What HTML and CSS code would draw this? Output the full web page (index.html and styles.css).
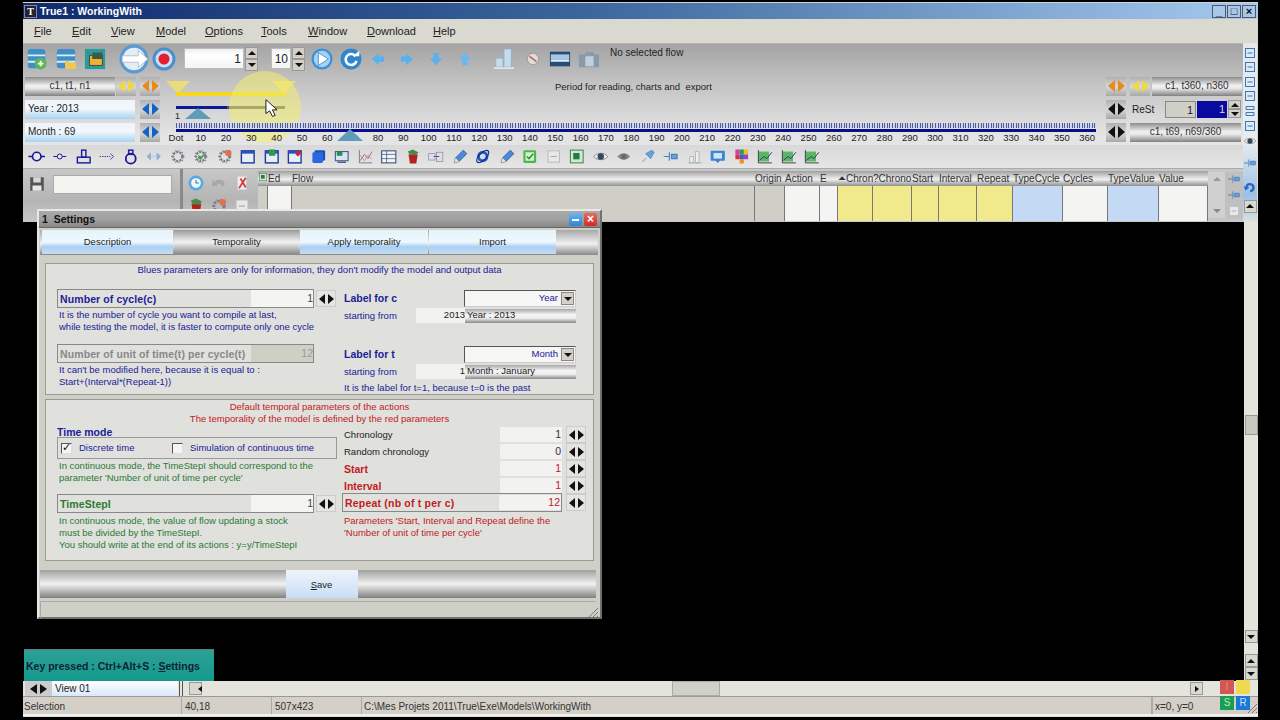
FILE: index.html
```html
<!DOCTYPE html>
<html lang="en">
<head>
  <meta charset="UTF-8" />
  <title>True1 : WorkingWith</title>
  <link rel="stylesheet" href="styles.css">
</head>
<body>
  <svg class="defs" width="0" height="0">
    <symbol id="db-add" viewBox="0 0 24 24"><rect x="2" y="1" width="19" height="21" rx="3" fill="#3f8fc8"/><path d="M2 8h19M2 15h19" stroke="#d8eefa" stroke-width="2"/><circle cx="16" cy="17" r="6.5" fill="#58b858"/><path d="M13 17h6M16 14v6" stroke="#fff" stroke-width="2"/></symbol>
    <symbol id="db-open" viewBox="0 0 24 24"><rect x="2" y="1" width="20" height="21" rx="3" fill="#3f8fc8"/><path d="M2 8h20M2 15h20" stroke="#d8eefa" stroke-width="2"/><path d="M11 14h4l1 2h7v7H11z" fill="#f0c850"/></symbol>
    <symbol id="db-win" viewBox="0 0 24 24"><rect x="1" y="1" width="22" height="22" fill="#2a9a9a"/><rect x="6" y="8" width="14" height="11" fill="#f0b030" stroke="#444"/><rect x="9" y="5" width="11" height="7" fill="#3a5a50"/></symbol>
    <symbol id="ring-go" viewBox="0 0 28 28"><circle cx="14" cy="14" r="13.5" fill="#5a9ad4"/><circle cx="14" cy="14" r="10.5" fill="#e4ecf4"/><path d="M3 11h15V6l9 8-9 8v-5H3z" fill="#fff" stroke="#a4b4c4" stroke-width=".7"/></symbol>
    <symbol id="ring-rec" viewBox="0 0 24 24"><circle cx="12" cy="12" r="11.5" fill="#4a90d0"/><circle cx="12" cy="12" r="8.5" fill="#cfe0ee"/><circle cx="12" cy="12" r="5.5" fill="#e02030"/></symbol>
    <symbol id="ring-play" viewBox="0 0 24 24"><circle cx="12" cy="12" r="11.5" fill="#3f8fd8"/><circle cx="12" cy="12" r="9" fill="#a8d2f2"/><path d="M8 5l11 7-11 7z" fill="#fff" stroke="#3f8fd8"/></symbol>
    <symbol id="ring-loop" viewBox="0 0 24 24"><circle cx="12" cy="12" r="11.5" fill="#2f86cc"/><path d="M17 9a6 6 0 1 0 1 5" fill="none" stroke="#fff" stroke-width="2.8"/><path d="M14 9h7V3z" fill="#fff"/></symbol>
    <symbol id="arr-l" viewBox="0 0 16 16"><path d="M1 8l8-7v4h6v6H9v4z" fill="#5ab0ee"/></symbol>
    <symbol id="arr-r" viewBox="0 0 16 16"><path d="M15 8L7 1v4H1v6h6v4z" fill="#5ab0ee"/></symbol>
    <symbol id="arr-d" viewBox="0 0 16 16"><path d="M8 15l7-8h-4V1H5v6H1z" fill="#5ab0ee"/></symbol>
    <symbol id="arr-u" viewBox="0 0 16 16"><path d="M8 1l7 8h-4v6H5V9H1z" fill="#6ab8f0"/></symbol>
    <symbol id="tall-bars" viewBox="0 0 24 24"><path d="M3 11h8v10H3zM12 1h8v20h-8z" fill="#c6dcea" stroke="#8fb0c4"/><path d="M1 22h22" stroke="#dfe6ea" stroke-width="2"/></symbol>
    <symbol id="gauge" viewBox="0 0 16 16"><circle cx="8" cy="8" r="6.5" fill="#dcdcdc" stroke="#999"/><path d="M4 5l8 6" stroke="#c06040" stroke-width="1.5"/></symbol>
    <symbol id="landscape" viewBox="0 0 24 20"><rect x="1" y="2" width="22" height="16" fill="#284c78"/><rect x="2" y="5" width="20" height="6" fill="#a8c8e0"/><rect x="2" y="11" width="20" height="2" fill="#e8eef2"/></symbol>
    <symbol id="camera" viewBox="0 0 24 20"><path d="M1 5h6l2-3h7l2 3h5v14H1z" fill="#8a9aa8"/><rect x="8" y="7" width="9" height="11" fill="#c0d0dc"/></symbol>
    <symbol id="node-big" viewBox="0 0 24 24"><path d="M0 12h24" stroke="#1a1a9a" stroke-width="2.4"/><circle cx="12" cy="12" r="6" fill="#e6e6e6" stroke="#1a1a9a" stroke-width="2.4"/></symbol>
    <symbol id="node-small" viewBox="0 0 24 24"><path d="M3 12h18" stroke="#1a1a9a" stroke-width="1.4"/><circle cx="12" cy="12" r="3.5" fill="#e6e6e6" stroke="#1a1a9a" stroke-width="1.4"/></symbol>
    <symbol id="stamp" viewBox="0 0 24 24"><rect x="9" y="3" width="6" height="10" fill="none" stroke="#1a1a9a" stroke-width="2"/><rect x="3" y="13" width="18" height="8" fill="none" stroke="#1a1a9a" stroke-width="2"/></symbol>
    <symbol id="dots" viewBox="0 0 24 24"><path d="M2 12h15" stroke="#3a3aa8" stroke-dasharray="2 1.4" stroke-width="1.4"/><path d="M17 8l5 4-5 4" fill="none" stroke="#3a3aa8" stroke-width="1.2"/></symbol>
    <symbol id="ring-top" viewBox="0 0 24 24"><circle cx="12" cy="15" r="7" fill="none" stroke="#1a1a9a" stroke-width="2.6"/><rect x="9" y="3" width="6" height="6" fill="none" stroke="#1a1a9a" stroke-width="2"/></symbol>
    <symbol id="swap" viewBox="0 0 24 24"><path d="M2 12l6-6v12zM22 12l-6-6v12z" fill="#8eaed6"/><path d="M8 12h8" stroke="#c4d4e6" stroke-width="3"/></symbol>
    <symbol id="gear" viewBox="0 0 24 24"><circle cx="12" cy="12" r="6.5" fill="none" stroke="#778" stroke-width="3" stroke-dasharray="3 1.6"/><circle cx="12" cy="12" r="8.5" fill="none" stroke="#889" stroke-width="1.6" stroke-dasharray="2 3"/></symbol>
    <symbol id="gear-green" viewBox="0 0 24 24"><use href="#gear"/><path d="M8 14l4 3 9-12-9 7-3-2z" fill="#3aa050"/></symbol>
    <symbol id="gear-red" viewBox="0 0 24 24"><use href="#gear"/><circle cx="17" cy="7" r="4.5" fill="#e07050"/></symbol>
    <symbol id="win" viewBox="0 0 24 24"><rect x="3" y="4" width="18" height="17" fill="#e6eef6" stroke="#1e3aa0" stroke-width="2"/><rect x="3" y="4" width="18" height="4" fill="#2a52b8"/></symbol>
    <symbol id="win-green" viewBox="0 0 24 24"><use href="#win"/><rect x="8" y="2" width="9" height="9" fill="#2e9a50"/></symbol>
    <symbol id="win-red" viewBox="0 0 24 24"><use href="#win"/><path d="M13 9l4-6 5 3-5 6z" fill="#d82030"/></symbol>
    <symbol id="stack" viewBox="0 0 24 24"><rect x="6" y="3" width="15" height="15" rx="2" fill="#1a50c0"/><rect x="3" y="6" width="15" height="15" rx="2" fill="#2a68e0"/></symbol>
    <symbol id="monitor" viewBox="0 0 24 24"><rect x="3" y="5" width="18" height="13" fill="#d8e4f0" stroke="#48608c" stroke-width="1.6"/><rect x="5" y="5" width="8" height="6" fill="#2a8a58"/><path d="M6 20h12" stroke="#48608c" stroke-width="2"/></symbol>
    <symbol id="chart" viewBox="0 0 24 24"><path d="M3 3v18h18" fill="none" stroke="#8a7a8a" stroke-width="1.4"/><path d="M4 18l6-9 5 6 6-10" fill="none" stroke="#c06868" stroke-width="1.4"/><path d="M4 10l6 8 5-8 5 6" fill="none" stroke="#8888b0" stroke-width="1"/></symbol>
    <symbol id="table" viewBox="0 0 24 24"><rect x="2" y="4" width="20" height="17" fill="#f4f4f4" stroke="#34507c" stroke-width="1.5"/><path d="M2 9h20M2 15h20M9 4v17" stroke="#34507c"/></symbol>
    <symbol id="trash" viewBox="0 0 24 24"><path d="M6 9h13l-2 13H8z" fill="#b82020"/><path d="M5 5l7-3 8 4-3 4H8z" fill="#4a8a48"/></symbol>
    <symbol id="link" viewBox="0 0 24 24"><rect x="2" y="8" width="9" height="9" fill="#dde" stroke="#889"/><rect x="13" y="6" width="9" height="13" fill="#dde" stroke="#889"/><path d="M9 12h8" stroke="#556" stroke-width="1.4"/></symbol>
    <symbol id="pencil" viewBox="0 0 24 24"><path d="M4 21l2-7L17 3l5 5-11 11z" fill="#4a8ad8" stroke="#1e4a90"/><path d="M4 21l2-7 5 5z" fill="#f4e0c0"/></symbol>
    <symbol id="orbit" viewBox="0 0 24 24"><circle cx="12" cy="12" r="8" fill="#2a58c8"/><circle cx="12" cy="12" r="4" fill="#cfe0f6"/><ellipse cx="12" cy="12" rx="11" ry="5" fill="none" stroke="#14307c" stroke-width="1.6" transform="rotate(-45 12 12)"/></symbol>
    <symbol id="check" viewBox="0 0 24 24"><rect x="3" y="3" width="18" height="18" rx="2" fill="#48b848"/><rect x="6" y="6" width="12" height="12" fill="#d8f0d0"/><path d="M8 12l3 3 6-7" fill="none" stroke="#289828" stroke-width="2.2"/></symbol>
    <symbol id="minus" viewBox="0 0 24 24"><rect x="4" y="4" width="16" height="16" fill="#e8e8e8" stroke="#bbb" stroke-width="1.4"/><path d="M8 12h8" stroke="#aaa" stroke-width="1.6"/></symbol>
    <symbol id="picture" viewBox="0 0 24 24"><rect x="3" y="3" width="18" height="18" fill="#d0ecd0" stroke="#407a50" stroke-width="1.4"/><rect x="7" y="7" width="9" height="9" fill="#287a48"/></symbol>
    <symbol id="eye" viewBox="0 0 24 24"><path d="M2 12c5-6 15-6 20 0-5 6-15 6-20 0z" fill="#eee" stroke="#667"/><circle cx="12" cy="12" r="4.5" fill="#33485c"/></symbol>
    <symbol id="eye-off" viewBox="0 0 24 24"><path d="M3 12c5-6 13-6 18 0-5 6-13 6-18 0z" fill="#8a8a8a"/><circle cx="12" cy="12" r="4" fill="#6a6a6a"/></symbol>
    <symbol id="pin" viewBox="0 0 24 24"><path d="M4 20l6-6M9 8l7 7 5-9-3-3z" fill="#6aa0dc" stroke="#4a80c0"/></symbol>
    <symbol id="pin-h" viewBox="0 0 24 24"><path d="M2 12h8" stroke="#4a80c0" stroke-width="1.6"/><path d="M10 6v12M13 9v6h8V9z" fill="#6aa0dc" stroke="#4a80c0" stroke-width="1.6"/></symbol>
    <symbol id="bars-thin" viewBox="0 0 24 24"><path d="M5 12h5v9H5zM13 5h5v16h-5z" fill="#eee" stroke="#9aa"/><path d="M2 21h20" stroke="#9aa"/></symbol>
    <symbol id="speech" viewBox="0 0 24 24"><path d="M3 4h18a1 1 0 0 1 1 1v12a1 1 0 0 1-1 1h-6l-3 3-3-3H3a1 1 0 0 1-1-1V5a1 1 0 0 1 1-1z" fill="#3a84d4"/><rect x="6" y="7" width="12" height="8" fill="#cfe4f8"/></symbol>
    <symbol id="swatch" viewBox="0 0 24 24"><path d="M3 2h6v7H3z" fill="#d83ab0"/><path d="M9 2h6v7H9z" fill="#2e9a50"/><path d="M15 2h6v7h-6z" fill="#f0c020"/><path d="M3 9h6v7H3z" fill="#e03030"/><path d="M9 9h6v7H9z" fill="#3060d0"/><path d="M15 9h6v7h-6z" fill="#a040c0"/><path d="M9 16h6v6H9z" fill="#f09020"/></symbol>
    <symbol id="chart-n" viewBox="0 0 24 24"><rect x="3" y="5" width="15" height="14" fill="#5ab860"/><path d="M3 3v18h19" fill="none" stroke="#445" stroke-width="1.4"/><path d="M5 17l6-5 4 3 7-9" fill="none" stroke="#303888" stroke-width="1.4"/></symbol>
    <symbol id="floppy" viewBox="0 0 24 24"><path d="M3 3h18v18H3z" fill="#555"/><rect x="7" y="3" width="10" height="7" fill="#d8d8d8"/><rect x="6" y="14" width="12" height="7" fill="#e8e8e8"/></symbol>
    <symbol id="clock" viewBox="0 0 24 24"><circle cx="12" cy="12" r="10" fill="#58a8e4"/><circle cx="12" cy="12" r="6.5" fill="#eef6fc"/><path d="M12 8v4h4" fill="none" stroke="#3a80c0" stroke-width="1.6"/></symbol>
    <symbol id="undo" viewBox="0 0 24 24"><path d="M5 12a8 8 0 0 1 15 2l-4 3a5 5 0 0 0-7-4l2 3H3V7l2 2z" fill="#a8a8a8"/></symbol>
    <symbol id="doc-red" viewBox="0 0 24 24"><path d="M6 3h12v18H6z" fill="#eee" stroke="#ccc"/><path d="M8 19L17 5M10 6l7 12" stroke="#d04040" stroke-width="2.4"/></symbol>
    <symbol id="undo-blue" viewBox="0 0 24 24"><path d="M4 12a8 8 0 1 1 8 9v-4a4 4 0 1 0-4-5l3 1-7 5-3-8 3 2z" fill="#2868c0"/></symbol>
    <symbol id="mini" viewBox="0 0 12 12"><rect x="1.5" y="1.5" width="9" height="9" fill="#dceaf6" stroke="#3c78b8"/><path d="M3.5 6h5" stroke="#3c78b8"/></symbol>
    <symbol id="mini-split" viewBox="0 0 12 12"><path d="M2 1.5h8v3H2zM2 7.5h8v3H2z" fill="#dceaf6" stroke="#3c78b8"/></symbol>
  </svg>

  <div class="app">
    <header class="titlebar">
      <span class="app-icon">T</span>
      <span class="title-text">True1 : WorkingWith</span>
      <span class="win-btns">
        <button class="win-btn">_</button><button class="win-btn">□</button><button class="win-btn">×</button>
      </span>
    </header>

    <nav class="menubar">
      <span class="m m-file"><u>F</u>ile</span>
      <span class="m m-edit"><u>E</u>dit</span>
      <span class="m m-view"><u>V</u>iew</span>
      <span class="m m-model"><u>M</u>odel</span>
      <span class="m m-options"><u>O</u>ptions</span>
      <span class="m m-tools"><u>T</u>ools</span>
      <span class="m m-window"><u>W</u>indow</span>
      <span class="m m-download"><u>D</u>ownload</span>
      <span class="m m-help"><u>H</u>elp</span>
    </nav>

    <div class="upper">
      <div class="upper-main">
        <section class="toolbar">
          <div class="row-one">
            <svg class="ic22"><use href="#db-add"/></svg>
            <svg class="ic22 gap6"><use href="#db-open"/></svg>
            <svg class="ic22 gap6"><use href="#db-win"/></svg>
            <svg class="ic28 gap13"><use href="#ring-go"/></svg>
            <svg class="ic24 gap2"><use href="#ring-rec"/></svg>
            <span class="num num-a">1</span>
            <span class="spin spin-tall"><i class="up"></i><i class="down"></i></span>
            <span class="num num-b">10</span>
            <span class="spin spin-tall"><i class="up"></i><i class="down"></i></span>
            <svg class="ic22 gap5"><use href="#ring-play"/></svg>
            <svg class="ic22 gap6"><use href="#ring-loop"/></svg>
            <svg class="ic14 gap10"><use href="#arr-l"/></svg>
            <svg class="ic14 gap15"><use href="#arr-r"/></svg>
            <svg class="ic14 gap15"><use href="#arr-d"/></svg>
            <svg class="ic14 gap15"><use href="#arr-u"/></svg>
            <svg class="ic22 gap20"><use href="#tall-bars"/></svg>
            <svg class="ic14 gap11"><use href="#gauge"/></svg>
            <svg class="ic22 gap10"><use href="#landscape"/></svg>
            <svg class="ic22 gap6"><use href="#camera"/></svg>
            <span class="no-flow">No selected flow</span>
          </div>

          <div class="row-two">
            <div class="side-left">
              <div class="line">
                <span class="steel steel-a">c1, t1, n1</span>
                <span class="nav gold"><i class="l"></i><i class="r"></i></span>
                <span class="nav orange"><i class="l"></i><i class="r"></i></span>
              </div>
              <div class="line">
                <span class="period-box">Year : 2013</span>
                <span class="nav blue"><i class="l"></i><i class="r"></i></span>
              </div>
              <div class="line">
                <span class="period-box">Month : 69</span>
                <span class="nav blue"><i class="l"></i><i class="r"></i></span>
              </div>
            </div>

            <div class="timeline">
              <div class="timeline-top">
                <div class="slider">
                  <span class="tri-y tri-y-a"></span>
                  <span class="tri-y tri-y-b"></span>
                  <span class="y-line"></span>
                  <span class="b-line"></span>
                  <span class="tri-b"></span>
                  <span class="slider-one">1</span>
                  <span class="halo"></span>
                  <svg class="cursor" viewBox="0 0 14 20"><path d="M1 1v15l4-3 3 6 3-1-3-6h5z" fill="#fff" stroke="#111"/></svg>
                </div>
                <p class="period-text">Period for reading, charts and &nbsp;export</p>
              </div>
              <div class="ruler">
                <div class="ticks"></div>
                <div class="rule"></div>
                <div class="labels">
                  <span class="dot-label">Dot</span><span>10</span><span>20</span><span>30</span><span>40</span><span>50</span><span>60</span><span>70</span><span>80</span><span>90</span><span>100</span><span>110</span><span>120</span><span>130</span><span>140</span><span>150</span><span>160</span><span>170</span><span>180</span><span>190</span><span>200</span><span>210</span><span>220</span><span>230</span><span>240</span><span>250</span><span>260</span><span>270</span><span>280</span><span>290</span><span>300</span><span>310</span><span>320</span><span>330</span><span>340</span><span>350</span><span>360</span>
                </div>
                <span class="tri-b tri-ruler"></span>
              </div>
            </div>

            <div class="side-right">
              <div class="line">
                <span class="nav orange"><i class="l"></i><i class="r"></i></span>
                <span class="nav gold nav-mid"><i class="l"></i><i class="r"></i></span>
                <span class="steel steel-b">c1, t360, n360</span>
              </div>
              <div class="line">
                <span class="nav"><i class="l"></i><i class="r"></i></span>
                <span class="rest">ReSt</span>
                <span class="rest-a">1</span>
                <span class="rest-b">1</span>
                <span class="spin"><i class="up"></i><i class="down"></i></span>
              </div>
              <div class="line">
                <span class="nav"><i class="l"></i><i class="r"></i></span>
                <span class="steel steel-c">c1, t69, n69/360</span>
              </div>
            </div>
          </div>
        </section>

        <div class="iconbar">
          <svg><use href="#node-big"/></svg><svg><use href="#node-small"/></svg><svg><use href="#stamp"/></svg><svg><use href="#dots"/></svg><svg><use href="#ring-top"/></svg><svg><use href="#swap"/></svg><svg><use href="#gear"/></svg><svg><use href="#gear-green"/></svg><svg><use href="#gear-red"/></svg><svg><use href="#win"/></svg><svg><use href="#win-green"/></svg><svg><use href="#win-red"/></svg><svg><use href="#stack"/></svg><svg><use href="#monitor"/></svg><svg><use href="#chart"/></svg><svg><use href="#table"/></svg><svg><use href="#trash"/></svg><svg><use href="#link"/></svg><svg><use href="#pencil"/></svg><svg><use href="#orbit"/></svg><svg><use href="#pencil"/></svg><svg><use href="#check"/></svg><svg><use href="#minus"/></svg><svg><use href="#picture"/></svg><svg><use href="#eye"/></svg><svg><use href="#eye-off"/></svg><svg><use href="#pin"/></svg><svg><use href="#pin-h"/></svg><svg><use href="#bars-thin"/></svg><svg><use href="#speech"/></svg><svg><use href="#swatch"/></svg><svg><use href="#chart-n"/></svg><svg><use href="#chart-n"/></svg><svg><use href="#chart-n"/></svg>
        </div>

        <div class="datarow">
          <div class="save-pane">
            <svg class="ic18"><use href="#floppy"/></svg>
            <span class="name-input"></span>
          </div>
          <div class="action-pane">
            <svg class="ic18"><use href="#clock"/></svg>
            <svg class="ic18"><use href="#undo"/></svg>
            <svg class="ic18"><use href="#doc-red"/></svg>
            <svg class="ic18"><use href="#trash"/></svg>
            <svg class="ic18"><use href="#gear-red"/></svg>
            <svg class="ic18"><use href="#minus"/></svg>
          </div>
          <div class="grid">
            <div class="h"><svg class="ic10"><use href="#picture"/></svg></div><div class="h">Ed</div><div class="h">Flow</div><div class="h">Origin</div><div class="h">Action</div><div class="h">E</div><div class="h">⏶Chron</div><div class="h">?Chrono</div><div class="h">Start</div><div class="h">Interval</div><div class="h">Repeat</div><div class="h">TypeCycle</div><div class="h">Cycles</div><div class="h">TypeValue</div><div class="h">Value</div>
            <div class="c grey"></div><div class="c white"></div><div class="c grey"></div><div class="c grey"></div><div class="c white"></div><div class="c white"></div><div class="c yellow"></div><div class="c yellow"></div><div class="c yellow"></div><div class="c yellow"></div><div class="c yellow"></div><div class="c sky"></div><div class="c white"></div><div class="c sky"></div><div class="c white"></div>
          </div>
          <div class="grid-scroll">
            <span class="arrow-cell up-light"></span>
            <span class="arrow-cell down-light"></span>
          </div>
          <div class="grid-pins">
            <svg class="ic14"><use href="#pin-h"/></svg>
            <svg class="ic14"><use href="#pin-h"/></svg>
            <svg class="ic14"><use href="#minus"/></svg>
          </div>
        </div>
      </div>

      <aside class="strip">
        <svg><use href="#mini"/></svg><svg><use href="#mini"/></svg><svg><use href="#mini"/></svg><svg><use href="#mini"/></svg><svg><use href="#mini-split"/></svg><svg><use href="#mini"/></svg>
        <svg class="strip-eye"><use href="#eye"/></svg>
        <svg class="strip-pin"><use href="#pin-h"/></svg>
        <svg class="strip-undo"><use href="#undo-blue"/></svg>
        <span class="sbtn strip-up"><i class="up"></i></span>
      </aside>
    </div>

    <div class="mdi">
      <div class="desktop">
        <div class="key-note">Key pressed : Ctrl+Alt+S : <u>S</u>ettings</div>
      </div>
      <div class="vscroll">
        <span class="vthumb"></span>
        <span class="sbtn vdown"><i class="down"></i></span>
        <span class="sbtn vup"><i class="up"></i></span>
        <span class="sbtn"><i class="down"></i></span>
      </div>
    </div>

    <div class="tabsbar">
      <span class="nav nav-tab"><i class="l"></i><i class="r"></i></span>
      <span class="view-tab">View 01</span>
      <span class="tab-grip"></span>
      <span class="sbtn hleft"><i class="l"></i></span>
      <span class="hthumb"></span>
      <span class="sbtn hright"><i class="r"></i></span>
    </div>

    <footer class="status">
      <span class="s s-sel">Selection</span>
      <span class="s s-pos">40,18</span>
      <span class="s s-size">507x423</span>
      <span class="s s-path">C:\Mes Projets 2011\True\Exe\Models\WorkingWith</span>
      <span class="s s-xy">x=0, y=0</span>
      <svg class="status-grip" viewBox="0 0 12 12"><path d="M11 2L2 11M11 6l-5 5M11 10l-1 1" stroke="#777"/></svg>
    </footer>

    <div class="badges">
      <span class="badge b-red">I</span><span class="badge b-yellow"></span>
      <span class="badge b-green">S</span><span class="badge b-blue">R</span>
    </div>

    <!-- settings child window, floats over the MDI area -->
    <div class="dialog">
      <div class="dlg-title">
        <span>1 &nbsp;Settings</span>
        <span class="dlg-btns"><b class="dlg-min"></b><b class="dlg-close">×</b></span>
      </div>
      <div class="tabs">
        <span class="tab tab-a">Description</span>
        <span class="tab tab-on">Temporality</span>
        <span class="tab tab-c">Apply temporality</span>
        <span class="tab tab-d">Import</span>
      </div>

      <section class="panel panel-one">
        <p class="center blue">Blues parameters are only for information, they don't modify the model and output data</p>
        <div class="cols cols-one">
          <div class="col-l">
            <div class="field-line">
              <div class="field"><b class="blue">Number of cycle(c)</b><span class="val">1</span></div>
              <span class="nav flat"><i class="l"></i><i class="r"></i></span>
            </div>
            <p class="help blue mb12">It is the number of cycle you want to compile at last,<br>while testing the model, it is faster to compute only one cycle</p>
            <div class="field-line">
              <div class="field off"><b>Number of unit of time(t) per cycle(t)</b><span class="val">12</span></div>
            </div>
            <p class="help blue">It can't be modified here, because it is equal to :<br>Start+(Interval*(Repeat-1))</p>
          </div>
          <div class="col-r">
            <div class="label-line"><b class="blue">Label for c</b><span class="combo blue">Year<i class="combo-btn"></i></span></div>
            <div class="start-line"><span class="blue">starting from</span><span class="start-val">2013</span><span class="start-name">Year : 2013</span></div>
            <div class="label-line second"><b class="blue">Label for t</b><span class="combo blue">Month<i class="combo-btn"></i></span></div>
            <div class="start-line"><span class="blue">starting from</span><span class="start-val">1</span><span class="start-name">Month : January</span></div>
            <p class="help blue past">It is the label for t=1, because t=0 is the past</p>
          </div>
        </div>
      </section>

      <section class="panel panel-two">
        <p class="center red">Default temporal parameters of the actions<br>The temporality of the model is defined by the red parameters</p>
        <div class="cols">
          <div class="col-l">
            <b class="blue time-mode">Time mode</b>
            <div class="mode-box">
              <label class="blue mode-a"><i class="tick on"></i>Discrete time</label>
              <label class="blue"><i class="tick"></i>Simulation of continuous time</label>
            </div>
            <p class="help green mb11">In continuous mode, the TimeStepI should correspond to the<br>parameter 'Number of unit of time per cycle'</p>
            <div class="field-line">
              <div class="field"><b class="green">TimeStepI</b><span class="val">1</span></div>
              <span class="nav flat"><i class="l"></i><i class="r"></i></span>
            </div>
            <p class="help green help-low">In continuous mode, the value of flow updating a stock<br>must be divided by the TimeStepI.<br>You should write at the end of its actions : y=y/TimeStepI</p>
          </div>
          <div class="col-r">
            <div class="param"><span>Chronology</span><span class="pval">1</span><span class="nav flat"><i class="l"></i><i class="r"></i></span></div>
            <div class="param"><span>Random chronology</span><span class="pval">0</span><span class="nav flat"><i class="l"></i><i class="r"></i></span></div>
            <div class="param"><b class="red">Start</b><span class="pval red">1</span><span class="nav flat"><i class="l"></i><i class="r"></i></span></div>
            <div class="param"><b class="red">Interval</b><span class="pval red">1</span><span class="nav flat"><i class="l"></i><i class="r"></i></span></div>
            <div class="param param-box"><div class="boxed"><b class="red">Repeat (nb of t per c)</b><span class="pval red">12</span></div><span class="nav flat"><i class="l"></i><i class="r"></i></span></div>
            <p class="help red red-help">Parameters 'Start, Interval and Repeat define the<br>'Number of unit of time per cycle'</p>
          </div>
        </div>
      </section>

      <div class="save-bar"><span class="save-btn"><u>S</u>ave</span></div>
      <div class="dlg-status"><svg class="grip" viewBox="0 0 12 12"><path d="M11 2L2 11M11 6l-5 5M11 10l-1 1" stroke="#777"/></svg></div>
    </div>
  </div>
</body>
</html>
```

FILE: styles.css
```css
html, body {
  margin: 0;
  height: 100%;
  overflow: hidden;
  background: #000;
}
body {
  font-family: "Liberation Sans", Arial, sans-serif;
  font-size: 10px;
  color: #222;
}
.defs { position: absolute; }
p { margin: 0; }
i { display: block; }

/* app frame */
.app {
  position: relative;
  margin: 2px 0 0 23px;
  width: 1235px;
  height: 715px;
  background: #dcdcd4;
  display: flex;
  flex-direction: column;
  border-top: 1px solid #d0d4d8;
  box-sizing: border-box;
}
.titlebar {
  height: 16px;
  flex: none;
  display: flex;
  align-items: center;
  background: linear-gradient(to right, #0f2a6e, #3a659c 45%, #a6caf0);
  color: #fff;
  font-weight: bold;
  font-size: 10.5px;
  padding-left: 1px;
}
.app-icon {
  width: 13px;
  height: 13px;
  background: #223;
  border: 1px solid #88a;
  box-sizing: border-box;
  font: bold 10px/11px "Liberation Serif", serif;
  text-align: center;
  margin-right: 3px;
}
.win-btns { margin-left: auto; margin-right: 2px; display: flex; gap: 1px; }
.win-btn {
  width: 14px;
  height: 13px;
  padding: 0;
  border: 1px solid #556;
  background: #a8c8ea;
  font: bold 11px/10px "Liberation Sans", sans-serif;
  color: #111;
}
.menubar {
  height: 24px;
  flex: none;
  display: flex;
  align-items: center;
  background: #d9d9cf;
  font-size: 11px;
  color: #222;
  position: relative;
}
.m { flex: none; }
.m-file { margin-left: 11px; width: 38px; }
.m-edit { width: 39px; }
.m-view { width: 45px; }
.m-model { width: 49px; }
.m-options { width: 56px; }
.m-tools { width: 47px; }
.m-window { width: 59px; }
.m-download { width: 66px; }

.upper { display: flex; flex: none; }
.upper-main { width: 1220px; }

/* top toolbar */
.toolbar {
  height: 102px;
  background: linear-gradient(to bottom, #a4a4a4, #c4c4c4 40%, #e4e4e4 90%);
  border-top: 1px solid #b8b8b0;
  box-sizing: border-box;
}
.row-one {
  height: 29px;
  display: flex;
  align-items: center;
  padding-left: 3px;
  position: relative;
}
.ic10 { width: 10px; height: 10px; }
.ic14 { width: 14px; height: 14px; flex: none; }
.ic18 { width: 18px; height: 18px; flex: none; }
.ic22 { width: 22px; height: 22px; flex: none; }
.ic24 { width: 24px; height: 24px; flex: none; }
.ic28 { width: 30px; height: 30px; flex: none; }
.gap2 { margin-left: 3px; }
.gap5 { margin-left: 6px; }
.gap6 { margin-left: 7px; }
.gap10 { margin-left: 9px; }
.gap11 { margin-left: 11px; }
.gap13 { margin-left: 13px; }
.gap15 { margin-left: 15px; }
.gap20 { margin-left: 21px; }
.num {
  height: 21px;
  background: linear-gradient(to bottom, #eee, #fff 30%, #f4f4f0);
  border: 1px solid #bbb;
  box-sizing: border-box;
  font-size: 12px;
  line-height: 20px;
  text-align: right;
  padding-right: 2px;
}
.num-a { width: 60px; margin-left: 8px; }
.num-b { width: 20px; margin-left: 13px; }
.spin {
  width: 13px;
  display: flex;
  flex-direction: column;
  flex: none;
}
.spin i {
  height: 9px;
  background: #d4d0c8;
  border: 1px solid #999;
  box-sizing: border-box;
  position: relative;
}
.spin-tall { margin-left: 1px; }
.spin-tall i { height: 12px; }
.spin i::after, .sbtn i::after, .arrow-cell::after {
  content: "";
  position: absolute;
  left: 50%;
  top: 50%;
  margin: -2px 0 0 -4px;
  border-left: 4px solid transparent;
  border-right: 4px solid transparent;
}
.spin .up::after, .sbtn .up::after { border-bottom: 4px solid #111; }
.spin .down::after, .sbtn .down::after { border-top: 4px solid #111; }
.no-flow {
  position: absolute;
  left: 587px;
  top: 3px;
  font-size: 10px;
}

.row-two { display: flex; height: 71px; padding-left: 2px; }
.side-left { width: 135px; flex: none; display: flex; flex-direction: column; padding-top: 3px; gap: 3px; }
.line { display: flex; align-items: center; height: 20px; gap: 4px; }
.steel {
  height: 19px;
  background: linear-gradient(to bottom, #8c8c8c, #f0f0f0 45%, #e8e8e8 60%, #808080);
  text-align: center;
  line-height: 18px;
  color: #333;
  font-size: 10px;
}
.steel-a { width: 90px; margin-right: -3px; }
.steel-b { width: 91px; margin-left: -2px; }
.steel-c { width: 111px; }
.period-box {
  width: 110px;
  height: 19px;
  padding-left: 3px;
  box-sizing: border-box;
  background: linear-gradient(to bottom, #eef4fa, #f2f8fc 45%, #a8d2f2);
  line-height: 18px;
  font-size: 10px;
  margin-right: 1px;
}
.nav {
  display: inline-flex;
  flex: none;
  width: 20px;
  height: 19px;
  align-items: center;
  justify-content: center;
  gap: 3px;
  background: linear-gradient(to bottom, #b0b0b0, #d8d8d8 50%, #a8a8a8);
}
.nav i { width: 0; height: 0; border-top: 6px solid transparent; border-bottom: 6px solid transparent; }
.nav .l { border-right: 7px solid #111; }
.nav .r { border-left: 7px solid #111; }
.nav.gold .l { border-right-color: #f0d840; }
.nav.gold .r { border-left-color: #f0d840; }
.nav.orange .l { border-right-color: #e88a1c; }
.nav.orange .r { border-left-color: #e88a1c; }
.nav.blue .l { border-right-color: #1464c8; }
.nav.blue .r { border-left-color: #1464c8; }
.nav-mid { margin-left: 0; }
.nav.flat { width: 20px; height: 17px; background: #e4e4e0; border: 1px solid #ccc; box-sizing: border-box; }
.nav.flat i { border-top-width: 5px; border-bottom-width: 5px; }
.nav.flat .l { border-right-width: 6px; }
.nav.flat .r { border-left-width: 6px; }

.timeline { width: 945px; flex: none; }
.timeline-top { height: 49px; display: flex; }
.slider { position: relative; width: 180px; flex: none; }
.tri-y {
  position: absolute;
  top: 8px;
  width: 0;
  height: 0;
  border-left: 12px solid transparent;
  border-right: 12px solid transparent;
  border-top: 13px solid #eadb7c;
}
.tri-y-a { left: 6px; }
.tri-y-b { left: 112px; }
.y-line { position: absolute; left: 16px; top: 19px; width: 110px; height: 4px; background: #f6d820; }
.b-line {
  position: absolute;
  left: 16px;
  top: 33px;
  width: 109px;
  height: 3px;
  background: linear-gradient(to right, #0a1a90 47%, #555 47%);
}
.tri-b {
  position: absolute;
  left: 25px;
  top: 35px;
  border-left: 13px solid transparent;
  border-right: 13px solid transparent;
  border-bottom: 11px solid #5f9cba;
}
.slider-one { position: absolute; left: 15px; top: 38px; font-size: 9px; }
.halo {
  position: absolute;
  left: 69px;
  top: -2px;
  width: 72px;
  height: 72px;
  border-radius: 50%;
  background: rgba(240, 236, 110, .55);
}
.cursor { position: absolute; left: 105px; top: 25px; width: 13px; height: 20px; }
.period-text { margin: 8px 0 0 215px; white-space: nowrap; line-height: 12px; font-size: 9.5px; }

.ruler { position: relative; height: 22px; width: 932px; margin-left: 4px; overflow: hidden; }
.ticks {
  height: 5px;
  margin: 1px 0 0 12px;
  background: repeating-linear-gradient(to right, #4a5aa8 0 1px, #d4d6e0 1px 2.53px);
}
.rule { height: 3px; margin: 1px 0 0 12px; background: #06108c; }
.labels { display: flex; font-size: 9.5px; line-height: 12px; white-space: nowrap; }
.labels span { flex: none; width: 25.33px; text-align: center; }
.labels .dot-label { width: 24px; }
.tri-ruler { left: 173px; top: 7px; border-bottom-width: 12px; border-bottom-color: #5f9cba; }

.side-right { width: 136px; flex: none; display: flex; flex-direction: column; padding-top: 3px; gap: 3px; margin-left: 1px; }
.rest { width: 28px; margin-left: 2px; font-size: 10px; }
.rest-a, .rest-b { height: 17px; width: 31px; box-sizing: border-box; text-align: right; padding-right: 2px; line-height: 16px; font-size: 11px; }
.rest-a { background: #cfcfc8; border: 1px solid #888; margin-left: 1px; margin-right: -3px; }
.rest-b { background: #0a0aa0; color: #ddd; width: 30px; margin-right: -3px; }

/* icon row */
.iconbar {
  height: 24px;
  display: flex;
  align-items: center;
  padding-left: 1.5px;
  background: linear-gradient(to bottom, #d8d8d8, #e6e6e6);
  border-bottom: 1px solid #aaa;
  box-sizing: border-box;
}
.iconbar svg { flex: none; width: 17px; height: 17px; padding: 0 3.25px; }

/* data row */
.datarow { height: 53px; display: flex; background: linear-gradient(to bottom, #c8c8c8, #b4b4b4 60%, #c8c8c8); overflow: hidden; }
.save-pane { width: 160px; flex: none; display: flex; gap: 7px; padding: 6px 0 0 5px; box-sizing: border-box; border-right: 3px solid #8a8a8a; height: 53px; }
.name-input { width: 119px; height: 19px; background: #f4f4f0; border: 1px solid #aaa; box-sizing: border-box; }
.action-pane { width: 75px; flex: none; display: flex; flex-wrap: wrap; align-content: flex-start; padding: 5px 0 0 4px; box-sizing: border-box; gap: 5px; }
.grid {
  display: grid;
  grid-template-columns: 10px 24px 463px 30px 35px 18px 35px 39px 27px 38px 36px 50px 45px 51px 49px;
  grid-template-rows: 15px 35px;
  width: 950px;
  flex: none;
  margin-top: 2px;
}
.h {
  background: linear-gradient(to bottom, #a0a0a0, #f0f0f0 55%, #909090);
  line-height: 15px;
  white-space: nowrap;
  overflow: hidden;
  color: #333;
}
.c { border-right: 1px solid #777; box-sizing: border-box; }
.c.grey { background: #cfcfc8; }
.c.white { background: #f4f4f2; }
.c.yellow { background: #f0ea8c; }
.c.sky { background: #c4daf4; }
.grid-scroll { width: 17px; flex: none; display: flex; flex-direction: column; justify-content: space-between; background: #d0d0d0; height: 46px; margin-top: 3px; }
.arrow-cell { display: block; height: 14px; position: relative; }
.up-light::after { border-bottom: 4px solid #999; }
.down-light::after { border-top: 4px solid #888; }
.grid-pins { width: 18px; flex: none; display: flex; flex-direction: column; align-items: center; gap: 2px; background: #c0c0c0; height: 46px; margin-top: 3px; }

/* right strip */
.strip {
  width: 14px;
  flex: none;
  display: flex;
  flex-direction: column;
  align-items: center;
  background: linear-gradient(to bottom, #e4e8ec, #e8ecef 55%, #9cc0e6 85%, #dce0e0);
  padding-top: 1px;
}
.strip svg { width: 12px; height: 12px; margin-top: 2.6px; flex: none; }
.strip .strip-eye { width: 14px; height: 14px; margin-top: 2px; }
.strip .strip-pin { width: 14px; height: 14px; margin-top: 8px; }
.strip .strip-undo { width: 14px; height: 16px; margin-top: 9px; }
.strip-up { margin-top: 5px; }
.sbtn {
  display: block;
  width: 13px;
  height: 13px;
  flex: none;
  background: #d8d8d0;
  border: 1px solid #999;
  box-sizing: border-box;
  position: relative;
}
.sbtn i { position: absolute; inset: 0; }

/* black client area */
.mdi { height: 459px; flex: none; display: flex; }
.desktop { flex: 1; background: #000; position: relative; }
.key-note {
  position: absolute;
  left: 1px;
  bottom: 0;
  width: 190px;
  height: 32px;
  padding: 10px 0 0 2px;
  box-sizing: border-box;
  background: linear-gradient(to bottom, #2f9f94, #139a8e);
  border-top: 1px solid #607a78;
  font-weight: bold;
  font-size: 10.5px;
  color: #123;
  white-space: nowrap;
}
.vscroll {
  width: 14px;
  flex: none;
  background: #e4e4dc;
  display: flex;
  flex-direction: column;
  align-items: center;
}
.vthumb { width: 13px; height: 20px; margin-top: 193px; background: #c8c8c0; border: 1px solid #999; box-sizing: border-box; }
.vdown { margin-top: 195px; }
.vup { margin-top: 11px; }

.tabsbar {
  height: 16px;
  flex: none;
  display: flex;
  align-items: center;
  background: #e4e4dc;
  border-bottom: 1px solid #999;
  padding-left: 2px;
  box-sizing: border-box;
}
.nav-tab { width: 27px; height: 15px; background: #ccc; }
.nav-tab i { border-top-width: 5px; border-bottom-width: 5px; }
.view-tab {
  width: 126px;
  height: 15px;
  line-height: 16px;
  padding-left: 3px;
  box-sizing: border-box;
  background: linear-gradient(to bottom, #fff, #d8e8fa);
}
.tab-grip { width: 4px; height: 15px; margin: 0 6px 0 1px; border-left: 1px solid #555; border-right: 1px solid #555; box-sizing: border-box; }
.sbtn i.l::after, .sbtn i.r::after {
  content: "";
  position: absolute;
  left: 50%;
  top: 50%;
  margin: -3px 0 0 -2px;
  border-top: 3px solid transparent;
  border-bottom: 3px solid transparent;
}
.sbtn i.l::after { border-right: 4px solid #111; }
.sbtn i.r::after { border-left: 4px solid #111; }
.hthumb { width: 48px; height: 15px; margin-left: 470px; background: #d0d0c8; border: 1px solid #aaa; box-sizing: border-box; }
.hright { margin-left: 470px; }

.status {
  height: 19px;
  flex: none;
  display: flex;
  align-items: center;
  background: #d4d0c8;
  border-bottom: 2px solid #f0f0f0;
  box-sizing: border-box;
  color: #333;
  position: relative;
}
.s { height: 100%; line-height: 20px; padding-left: 1px; box-sizing: border-box; border-right: 1px solid #aaa; flex: none; }
.s-sel { width: 159px; }
.s-pos { width: 90px; padding-left: 3px; }
.s-size { width: 90px; padding-left: 3px; }
.s-path { width: 790px; padding-left: 2px; }
.s-xy { border: 0; border-left: 1px solid #aaa; padding-left: 2px; }
.status-grip { position: absolute; right: 0; bottom: 0; width: 12px; height: 12px; }

.badges {
  position: absolute;
  left: 1197px;
  top: 677px;
  display: grid;
  grid-template-columns: 14px 14px;
  gap: 2px;
}
.badge { height: 14px; font-size: 10px; line-height: 14px; text-align: center; }
.b-red { background: #d05850; color: #e88; }
.b-yellow { background: #f0d850; }
.b-green { background: #18a050; color: #bfe8c8; }
.b-blue { background: #1a78d8; color: #bfe0ff; }

/* settings dialog */
.dialog {
  position: absolute;
  left: 14px;
  top: 206px;
  width: 565px;
  height: 410px;
  background: #cfcfc8;
  border: 2px solid #e8e8e4;
  border-right-color: #707070;
  border-bottom-color: #707070;
  box-sizing: border-box;
  display: flex;
  flex-direction: column;
  padding: 0 4px 0 1px;
  font-size: 9.5px;
}
.dlg-title {
  height: 16px;
  margin: 0 -4px 0 -1px;
  padding-left: 3px;
  flex: none;
  display: flex;
  align-items: center;
  justify-content: space-between;
  font-weight: bold;
  font-size: 10.5px;
  color: #111;
  background: linear-gradient(to bottom, #aaa, #a0a0a0 50%, #888);
  border-bottom: 1px solid #666;
}
.dlg-btns { display: flex; gap: 2px; margin-right: 3px; }
.dlg-min, .dlg-close { width: 13px; height: 13px; border-radius: 2px; display: block; text-align: center; color: #fff; font-size: 12px; line-height: 12px; }
.dlg-min { background: linear-gradient(to bottom, #6cb4ee, #2f84d8); position: relative; }
.dlg-min::after { content: ""; position: absolute; left: 3px; top: 6px; width: 7px; height: 2px; background: #fff; }
.dlg-close { background: linear-gradient(to bottom, #e86a62, #d02a28); }

.tabs {
  margin: 2px -2px 8px 0;
  padding-left: 2px;
  height: 25px;
  flex: none;
  display: flex;
  gap: 1px;
  background: linear-gradient(to bottom, #a8a8a8, #f0f0f0 55%, #888);
}
.tab { text-align: center; line-height: 23px; color: #222; height: 24px; background: linear-gradient(to bottom, #e6f2fa, #eef8fe 50%, #a8d0f4 70%, #c8dcf0); }
.tab-a { width: 131px; }
.tab-on { width: 125px; background: linear-gradient(to bottom, #9a9a9a, #f2f2f2 50%, #8a8a8a); }
.tab-c { width: 128px; }
.tab-d { width: 127px; }

.panel {
  margin: 0 0 4px 5px;
  width: 549px;
  background: #e0e0dc;
  border: 1px solid #9a9a94;
  box-sizing: border-box;
  flex: none;
}
.panel-one { height: 132px; }
.panel-two { height: 162px; margin-bottom: 9px; }
.center { text-align: center; line-height: 12px; }
.panel-one .center { height: 25px; padding-top: 0; }
.blue { color: #20209a; }
.red { color: #c02024; }
.green { color: #2a7a36; }
.cols {
  display: grid;
  grid-template-columns: 280px 242px;
  column-gap: 7px;
  padding-left: 11px;
  line-height: 12px;
}
.panel-two .center { height: 25px; padding-top: 1px; box-sizing: border-box; }
.field-line { display: flex; align-items: center; gap: 2px; height: 19px; }
.field {
  width: 257px;
  height: 19px;
  box-sizing: border-box;
  border: 1px solid #888;
  display: flex;
  justify-content: space-between;
  align-items: center;
  padding-left: 2px;
  font-size: 10.5px;
}
.field b { letter-spacing: .1px; }
.val {
  width: 62px;
  height: 17px;
  background: #f4f4f2;
  text-align: right;
  line-height: 16px;
  color: #444;
  font-size: 10.5px;
}
.field.off b { color: #888; }
.field.off .val { background: #cfcfc4; color: #999; }
.help { line-height: 12px; white-space: nowrap; padding: 1px 0 0 2px; }
.help-low { padding-top: 2px; }
.mb12 { margin-bottom: 11px; }
.mb11 { margin-bottom: 10px; }

.label-line { display: flex; align-items: center; height: 18px; margin-bottom: 1px; }
.label-line b { width: 120px; flex: none; font-size: 10.5px; }
.second { margin-top: 22px; }
.combo {
  width: 112px;
  height: 17px;
  box-sizing: border-box;
  background: #f6f6f4;
  border: 1px solid #555;
  border-bottom-color: #ccc;
  border-right-color: #ccc;
  display: flex;
  align-items: center;
  justify-content: flex-end;
  padding-right: 1px;
  gap: 3px;
}
.combo-btn { width: 13px; height: 13px; background: #d4d0c8; border: 1px solid #888; box-sizing: border-box; position: relative; }
.combo-btn::after { content: ""; position: absolute; left: 2px; top: 4px; border-left: 4px solid transparent; border-right: 4px solid transparent; border-top: 4px solid #111; }
.start-line { display: flex; align-items: center; height: 15px; }
.start-line > span:first-child { width: 72px; flex: none; }
.start-val { width: 49px; height: 15px; background: #f2f2f0; text-align: right; line-height: 14px; flex: none; }
.start-name { width: 111px; height: 14px; padding-left: 2px; box-sizing: border-box; line-height: 12px; background: linear-gradient(to bottom, #a8a8a8, #f4f4f4 40%, #eee 65%, #888); }
.past { padding-left: 0; margin-top: 2px; }

.time-mode { display: block; height: 12px; line-height: 14px; font-size: 10.5px; }
.mode-box { height: 22px; width: 280px; border: 1px solid #999; box-sizing: border-box; display: flex; align-items: center; padding-left: 3px; }
.mode-box label { display: flex; align-items: center; gap: 7px; }
.mode-a { width: 111px; }
.tick { width: 11px; height: 11px; background: #f4f4f4; border: 1px solid #555; border-right-color: #ddd; border-bottom-color: #ddd; box-sizing: border-box; position: relative; }
.tick.on::after { content: "✓"; position: absolute; left: 0; top: -2px; font: bold 11px/12px "DejaVu Sans", sans-serif; color: #111; }
.col-r { padding-top: 1px; }
.cols-one .col-r { padding-top: 0; }
.param { display: flex; align-items: center; height: 17px; width: 242px; }
.param > :first-child { width: 156px; flex: none; }
.param b { font-size: 10.5px; }
.pval { width: 62px; height: 15px; background: #f2f2f0; text-align: right; line-height: 14px; padding-right: 1px; box-sizing: border-box; flex: none; color: #333; font-size: 10.5px; }
.pval.red { color: #c02024; }
.param .nav { margin-left: 4px; }
.param-box { height: 19px; margin-top: -1px; }
.param > .boxed { width: 220px; height: 19px; margin-left: -2px; display: flex; align-items: center; justify-content: space-between; border: 1px solid #888; box-sizing: border-box; padding-left: 2px; flex: none; }
.param-box b { letter-spacing: .2px; }
.red-help { margin-top: 2px; padding-left: 0; }

.save-bar {
  height: 28px;
  flex: none;
  display: flex;
  justify-content: center;
  background: linear-gradient(to bottom, #a0a0a0, #f2f2f2 50%, #808080);
}
.save-btn { width: 72px; margin-left: 7px; text-align: center; line-height: 29px; background: linear-gradient(to bottom, #eef4fa, #c8def6); }
.dlg-status { margin-top: 3px; height: 17px; flex: none; position: relative; border-top: 1px solid #aaa; border-left: 1px solid #aaa; box-sizing: border-box; }
.grip { position: absolute; right: -3px; bottom: 0; width: 12px; height: 12px; }
```
